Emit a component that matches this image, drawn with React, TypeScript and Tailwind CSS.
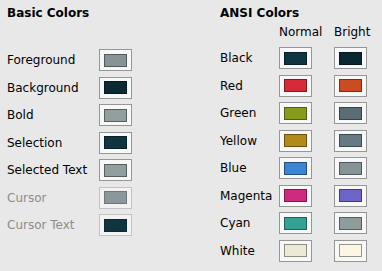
import React from "react";

type Sw = { label: string; color: string; disabled?: boolean };

const basic: Sw[] = [
  { label: "Foreground", color: "#879497" },
  { label: "Background", color: "#0b2a34" },
  { label: "Bold", color: "#939e9e" },
  { label: "Selection", color: "#0f3541" },
  { label: "Selected Text", color: "#939e9e" },
  { label: "Cursor", color: "#8b979a", disabled: true },
  { label: "Cursor Text", color: "#0f3541", disabled: true },
];

const ansi: { label: string; normal: string; bright: string }[] = [
  { label: "Black", normal: "#0f3541", bright: "#0a2832" },
  { label: "Red", normal: "#d62a36", bright: "#cc4b22" },
  { label: "Green", normal: "#879c1c", bright: "#5b6d74" },
  { label: "Yellow", normal: "#b3891a", bright: "#657a82" },
  { label: "Blue", normal: "#3b86d2", bright: "#849396" },
  { label: "Magenta", normal: "#cf2a80", bright: "#6c65c5" },
  { label: "Cyan", normal: "#34a096", bright: "#909c9c" },
  { label: "White", normal: "#eee9d5", bright: "#fcf6e3" },
];

function Well({ color, disabled }: { color: string; disabled?: boolean }) {
  return (
    <div
      className={
        "w-[33px] h-[22px] border flex items-center justify-center shrink-0 " +
        (disabled ? "border-[#c2c2c2] bg-[#f2f2f2]" : "border-[#969696] bg-[#f8f8f8]")
      }
    >
      <div
        className={"w-[23px] h-[13px] border " + (disabled ? "border-[rgba(0,0,0,0.2)]" : "border-[rgba(0,0,0,0.4)]")}
        style={{ backgroundColor: color }}
      />
    </div>
  );
}

export default function App() {
  return (
    <div className="w-[382px] h-[271px] bg-[#e8e8e8] flex text-[12px] leading-[14px] text-black font-['DejaVu_Sans',sans-serif] overflow-hidden">
      <div className="w-[213px] pl-[7px] pt-[6px] flex flex-col">
        <div className="font-bold">Basic Colors</div>
        <div className="mt-[29px] flex flex-col gap-[5.5px]">
          {basic.map((b) => (
            <div key={b.label} className="flex items-center h-[22px]">
              <div className={"w-[92px] " + (b.disabled ? "text-[#8c8c8c]" : "")}>{b.label}</div>
              <Well color={b.color} disabled={b.disabled} />
            </div>
          ))}
        </div>
      </div>
      <div className="pl-[7px] pt-[6px] flex flex-col">
        <div className="font-bold">ANSI Colors</div>
        <div className="flex mt-[5px]">
          <div className="w-[59px]" />
          <div className="w-[55px]">Normal</div>
          <div>Bright</div>
        </div>
        <div className="mt-[8px] flex flex-col gap-[5.5px]">
          {ansi.map((a) => (
            <div key={a.label} className="flex items-center h-[22px]">
              <div className="w-[59px]">{a.label}</div>
              <Well color={a.normal} />
              <div className="w-[22px]" />
              <Well color={a.bright} />
            </div>
          ))}
        </div>
      </div>
    </div>
  );
}
